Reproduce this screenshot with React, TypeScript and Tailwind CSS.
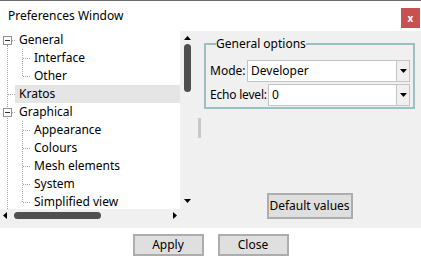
import { ReactNode } from 'react';

const font = { fontFamily: '"Noto Sans", "Open Sans", sans-serif' };

function Tri({ dir }: { dir: 'up' | 'down' | 'left' | 'right' }) {
  const pts = {
    up: '0,4 7,4 3.5,0',
    down: '0,0 7,0 3.5,4',
    left: '4,0 4,7 0,3.5',
    right: '0,0 0,7 4,3.5',
  }[dir];
  const vert = dir === 'up' || dir === 'down';
  return (
    <svg width={vert ? 7 : 4} height={vert ? 4 : 7} className="block">
      <polygon points={pts} fill="#000" />
    </svg>
  );
}

function Expander() {
  return (
    <div className="w-[9px] h-[9px] border border-[#919191] bg-white flex items-center justify-center">
      <div className="w-[5px] h-px bg-[#333]" />
    </div>
  );
}

function TreeRow({ level, label, selected, children }: { level: 0 | 1; label: string; selected?: boolean; children?: ReactNode }) {
  return (
    <div className="h-[18px] flex items-center">
      <div className={level === 0 ? 'w-[15px] h-full relative' : 'w-[30px] h-full relative'}>{children}</div>
      <div className={`h-full flex items-center pl-[4px] pr-2 ${selected ? 'bg-[#e5e5e5] flex-1' : ''}`}>
        <span className="text-[12px] leading-none text-black whitespace-nowrap">{label}</span>
      </div>
    </div>
  );
}

const vDot = 'absolute border-l border-dotted border-[#a0a0a0]';
const hDot = 'absolute border-t border-dotted border-[#a0a0a0]';

function Combo({ value, width }: { value: string; width: string }) {
  return (
    <div className={`${width} h-[22px] shrink-0 flex border border-[#c4c4c4] bg-white`}>
      <div className="flex-1 flex items-center pl-[3px] text-[12px]">{value}</div>
      <div className="w-[13px] border-l border-[#c4c4c4] bg-[#f0f0f0] flex items-center justify-center">
        <Tri dir="down" />
      </div>
    </div>
  );
}

function Btn({ label, w }: { label: string; w: string }) {
  return (
    <button className={`${w} border-2 border-[#adadad] bg-[#dfdfdf] text-[12px] text-black flex items-center justify-center`}>
      {label}
    </button>
  );
}

export default function App() {
  return (
    <div className="w-[421px] h-[265px] bg-white border-t border-[#6b6b6b] flex flex-col" style={font}>
      {/* Title bar */}
      <div className="h-[30px] flex items-start justify-between pl-[8px] pr-px">
        <span className="text-[12px] text-black mt-[6px]">Preferences Window</span>
        <div className="mt-[7px] w-[19px] h-[20px] bg-[#c75050] flex items-center justify-center text-white text-[10px] font-bold leading-none">
          x
        </div>
      </div>

      {/* Main */}
      <div className="h-[197px] bg-[#f0f0f0] flex">
        <div className="w-[194px] flex flex-col">
          <div className="h-[178px] flex">
            <div className="w-[180px] bg-white overflow-hidden relative">
              <div className={`${vDot} left-[7px] top-[14px] h-[170px]`} />
              <TreeRow level={0} label="General">
                <div className="absolute left-[3px] top-[5px]"><Expander /></div>
                <div className={`${hDot} left-[12px] top-[9px] w-[3px]`} />
              </TreeRow>
              <div className="relative">
                <div className={`${vDot} left-[22px] top-0 h-[27px]`} />
                <TreeRow level={1} label="Interface">
                  <div className={`${hDot} left-[23px] top-[9px] w-[7px]`} />
                </TreeRow>
                <TreeRow level={1} label="Other">
                  <div className={`${hDot} left-[23px] top-[9px] w-[7px]`} />
                </TreeRow>
              </div>
              <TreeRow level={0} label="Kratos" selected>
                <div className={`${hDot} left-[8px] top-[9px] w-[7px]`} />
              </TreeRow>
              <TreeRow level={0} label="Graphical">
                <div className="absolute left-[3px] top-[5px]"><Expander /></div>
                <div className={`${hDot} left-[12px] top-[9px] w-[3px]`} />
              </TreeRow>
              <div className="relative">
                <div className={`${vDot} left-[22px] top-0 h-[81px]`} />
                {['Appearance', 'Colours', 'Mesh elements', 'System', 'Simplified view'].map((l) => (
                  <TreeRow key={l} level={1} label={l}>
                    <div className={`${hDot} left-[23px] top-[9px] w-[7px]`} />
                  </TreeRow>
                ))}
              </div>
            </div>
            <div className="w-[14px] flex flex-col items-center">
              <div className="mt-[5px]"><Tri dir="up" /></div>
              <div className="mt-[4px] w-[7px] h-[48px] rounded-full bg-[#4f4f4f]" />
              <div className="flex-1" />
              <div className="mb-[6px]"><Tri dir="down" /></div>
            </div>
          </div>
          <div className="h-[13px] flex items-center w-[180px] pl-[3px] pr-[3px]">
            <Tri dir="left" />
            <div className="ml-[7px] w-[87px] h-[7px] rounded-full bg-[#4f4f4f]" />
            <div className="flex-1" />
            <Tri dir="right" />
          </div>
        </div>

        {/* Right panel */}
        <div className="flex-1 flex">
          <div className="w-[10px] pl-[4px]">
            <div className="mt-[87px] w-[3px] h-[20px] bg-[#c8c8c8]" />
          </div>
          <div className="w-[211px] flex flex-col items-center pt-[5px]">
            <fieldset className="w-full border-2 border-[#9cbfc4] pl-[4px] pr-[1px] pb-px">
              <legend className="ml-[6px] px-0 text-[12px] leading-[16px]">General options</legend>
              <div className="flex flex-col gap-[2px] mt-[8px]">
                <div className="flex items-center gap-[2px]">
                  <span className="text-[12px] w-[35px] shrink-0 whitespace-nowrap">Mode:</span>
                  <Combo value="Developer" width="w-[163px]" />
                </div>
                <div className="flex items-center gap-[2px]">
                  <span className="text-[12px] w-[56px] shrink-0 whitespace-nowrap tracking-[-0.2px]">Echo level:</span>
                  <Combo value="0" width="w-[142px]" />
                </div>
              </div>
            </fieldset>
            <div className="flex-1" />
            <div className="mb-[9px] h-[26px] flex">
              <Btn label="Default values" w="w-[86px]" />
            </div>
          </div>
        </div>
      </div>

      {/* Footer */}
      <div className="flex-1 flex justify-center gap-[14px] pt-[6px]">
        <div className="h-[22px] flex"><Btn label="Apply" w="w-[71px]" /></div>
        <div className="h-[22px] flex"><Btn label="Close" w="w-[71px]" /></div>
      </div>
    </div>
  );
}
